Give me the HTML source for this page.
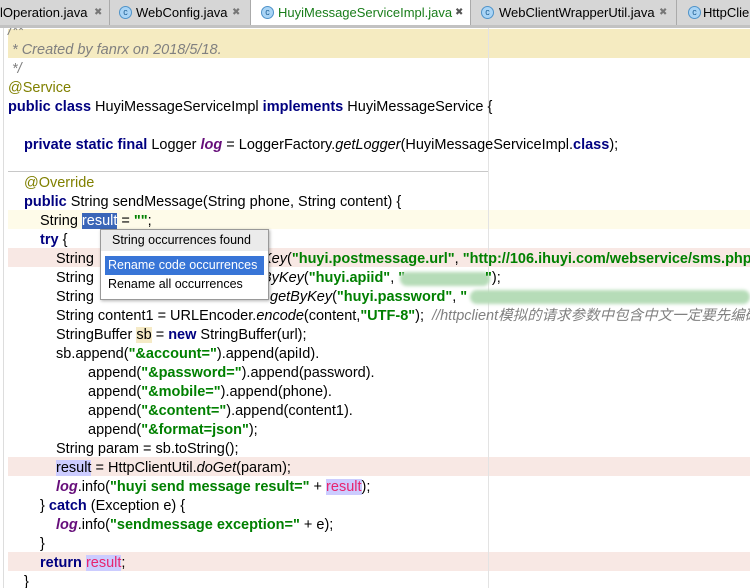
<!DOCTYPE html>
<html><head><meta charset="utf-8"><style>
*{margin:0;padding:0;box-sizing:border-box}
body{width:750px;height:588px;overflow:hidden;background:#fff;font-family:"Liberation Sans","Noto Sans CJK SC",sans-serif;font-size:14.5px;color:#000;position:relative}
#w{position:absolute;left:0;top:0;width:750px;height:588px;overflow:hidden}
.tabs{position:absolute;left:0;top:0;width:750px;height:28px;background:#d6d6d6;border-bottom:3px solid #c2c2c2;overflow:hidden}
.tab{position:absolute;top:0;height:25px;border-right:1px solid #aaa}
.t{position:absolute;top:0;line-height:25px;font-size:13px;white-space:nowrap}
.c{position:absolute;top:6px;width:13px;height:13px;border-radius:50%;background:#a9d4f5;border:1px solid #4f93c9;color:#1f5f93;font-size:9px;line-height:11px;text-align:center}
.x{position:absolute;top:0;line-height:25px;color:#777;font-size:10px}
.act{background:#fff;height:26px}
.gut{position:absolute;left:3px;top:28px;width:1px;height:560px;background:#ddd}
.margin{position:absolute;left:488px;top:28px;width:1px;height:560px;background:#e3e3e3}
.hl{position:absolute;left:8px;width:742px;height:19px}
.l{position:absolute;height:19px;line-height:19px;white-space:pre}
.k{color:#000080;font-weight:bold}
.s{color:#008000;font-weight:bold}
.an{color:#808000}
.cm{color:#808080;font-style:italic}
.it{font-style:italic}
.f{color:#660e7a;font-style:italic;font-weight:bold}
.r{color:#e8246e;background:#ccccff}
.u{background:#ccccff}
.blur{position:absolute;height:14px;background:#b6dcb8;border-radius:7px;filter:blur(1.5px)}
.pop{position:absolute;left:100px;top:229px;width:169px;height:71px;background:#fff;border:1px solid #999;box-shadow:1px 1px 3px rgba(0,0,0,.3);font-size:12.5px;white-space:nowrap}
.pop .h{height:21px;line-height:21px;background:#ebebeb;padding-left:11px}
.pop .i{height:19px;line-height:19px;padding-left:3px;margin:0 4px}
.pop .sel{background:#3875d7;color:#fff;margin-top:5px}
</style></head><body><div id="w">
<div class="hl" style="top:29px;height:29px;background:#f5ebc1;left:8px"></div>
<div class="hl" style="top:210px;background:#fefbe9"></div>
<div class="hl" style="top:248px;background:#f8e8e4"></div>
<div class="hl" style="top:457px;background:#f8e8e4"></div>
<div class="hl" style="top:552px;background:#f8e8e4"></div>
<div class="gut"></div>
<div class="margin"></div>
<div style="position:absolute;left:8px;top:171px;width:480px;height:1px;background:#c8c8c8"></div>

<div class="l cm" style="left:8px;top:22px">/**</div>
<div class="l cm" style="left:8px;top:41px"> * Created by fanrx on 2018/5/18.</div>
<div class="l cm" style="left:8px;top:60px"> */</div>
<div class="l an" style="left:8px;top:79px">@Service</div>
<div class="l" style="left:8px;top:98px"><span class="k">public class</span> HuyiMessageServiceImpl <span class="k">implements</span> HuyiMessageService {</div>
<div class="l" style="left:24px;top:136px"><span class="k">private static final</span> Logger <span class="f">log</span> = LoggerFactory.<span class="it">getLogger</span>(HuyiMessageServiceImpl.<span class="k">class</span>);</div>
<div class="l an" style="left:24px;top:174px">@Override</div>
<div class="l" style="left:24px;top:193px"><span class="k">public</span> String sendMessage(String phone, String content) {</div>
<div class="l" style="left:40px;top:212px">String <span style="background:#3a66b8;color:#fff">result</span> = <span class="s">""</span>;</div>
<div class="l" style="left:40px;top:231px"><span class="k">try</span> {</div>
<div class="l" style="left:56px;top:250px">String</div>
<div class="l" style="left:262px;top:250px"><span class="it">Key</span>(<span class="s">"huyi.postmessage.url"</span>, <span class="s">"http://106.ihuyi.com/webservice/sms.php?method=Submit"</span></div>
<div class="l" style="left:56px;top:269px">String</div>
<div class="l" style="left:262px;top:269px"><span class="it">ByKey</span>(<span class="s">"huyi.apiid"</span>, <span class="s">"</span></div>
<div class="blur" style="left:400px;top:272px;width:90px"></div>
<div class="l" style="left:485px;top:269px"><span class="s">"</span>);</div>
<div class="l" style="left:56px;top:288px">String</div>
<div class="l" style="left:270px;top:288px"><span class="it">getByKey</span>(<span class="s">"huyi.password"</span>, <span class="s">"</span></div>
<div class="blur" style="left:470px;top:290px;width:280px"></div>
<div class="l" style="left:56px;top:307px">String content1 = URLEncoder.<span class="it">encode</span>(content,<span class="s">"UTF-8"</span>);  <span class="cm">//httpclient模拟的请求参数中包含中文一定要先编码</span></div>
<div class="l" style="left:56px;top:326px">StringBuffer <span style="background:#f5eac6">sb</span> = <span class="k">new</span> StringBuffer(url);</div>
<div class="l" style="left:56px;top:345px">sb.append(<span class="s">"&amp;account="</span>).append(apiId).</div>
<div class="l" style="left:88px;top:364px">append(<span class="s">"&amp;password="</span>).append(password).</div>
<div class="l" style="left:88px;top:383px">append(<span class="s">"&amp;mobile="</span>).append(phone).</div>
<div class="l" style="left:88px;top:402px">append(<span class="s">"&amp;content="</span>).append(content1).</div>
<div class="l" style="left:88px;top:421px">append(<span class="s">"&amp;format=json"</span>);</div>
<div class="l" style="left:56px;top:440px">String param = sb.toString();</div>
<div class="l" style="left:56px;top:459px"><span class="u">result</span> = HttpClientUtil.<span class="it">doGet</span>(param);</div>
<div class="l" style="left:56px;top:478px"><span class="f">log</span>.info(<span class="s">"huyi send message result="</span> + <span class="r">result</span>);</div>
<div class="l" style="left:40px;top:497px">} <span class="k">catch</span> (Exception e) {</div>
<div class="l" style="left:56px;top:516px"><span class="f">log</span>.info(<span class="s">"sendmessage exception="</span> + e);</div>
<div class="l" style="left:40px;top:535px">}</div>
<div class="l" style="left:40px;top:554px"><span class="k">return</span> <span class="r">result</span>;</div>
<div class="l" style="left:24px;top:573px">}</div>

<div class="pop">
<div class="h">String occurrences found</div>
<div class="i sel">Rename code occurrences</div>
<div class="i">Rename all occurrences</div>
</div>

<div class="tabs">
<div class="tab" style="left:0;width:110px"></div>
<span class="t" style="left:0">lOperation.java</span><span class="x" style="left:94px">✖</span>
<div class="tab" style="left:110px;width:141px"></div>
<span class="c" style="left:119px">c</span><span class="t" style="left:136px">WebConfig.java</span><span class="x" style="left:232px">✖</span>
<div class="tab act" style="left:251px;width:220px"></div>
<span class="c" style="left:261px">c</span><span class="t" style="left:278px;color:#197d1a">HuyiMessageServiceImpl.java</span><span class="x" style="left:455px;color:#555">✖</span>
<div class="tab" style="left:471px;width:206px"></div>
<span class="c" style="left:481px">c</span><span class="t" style="left:499px">WebClientWrapperUtil.java</span><span class="x" style="left:659px">✖</span>
<span class="c" style="left:688px">c</span><span class="t" style="left:703px">HttpClie</span>
</div>
</div></body></html>
